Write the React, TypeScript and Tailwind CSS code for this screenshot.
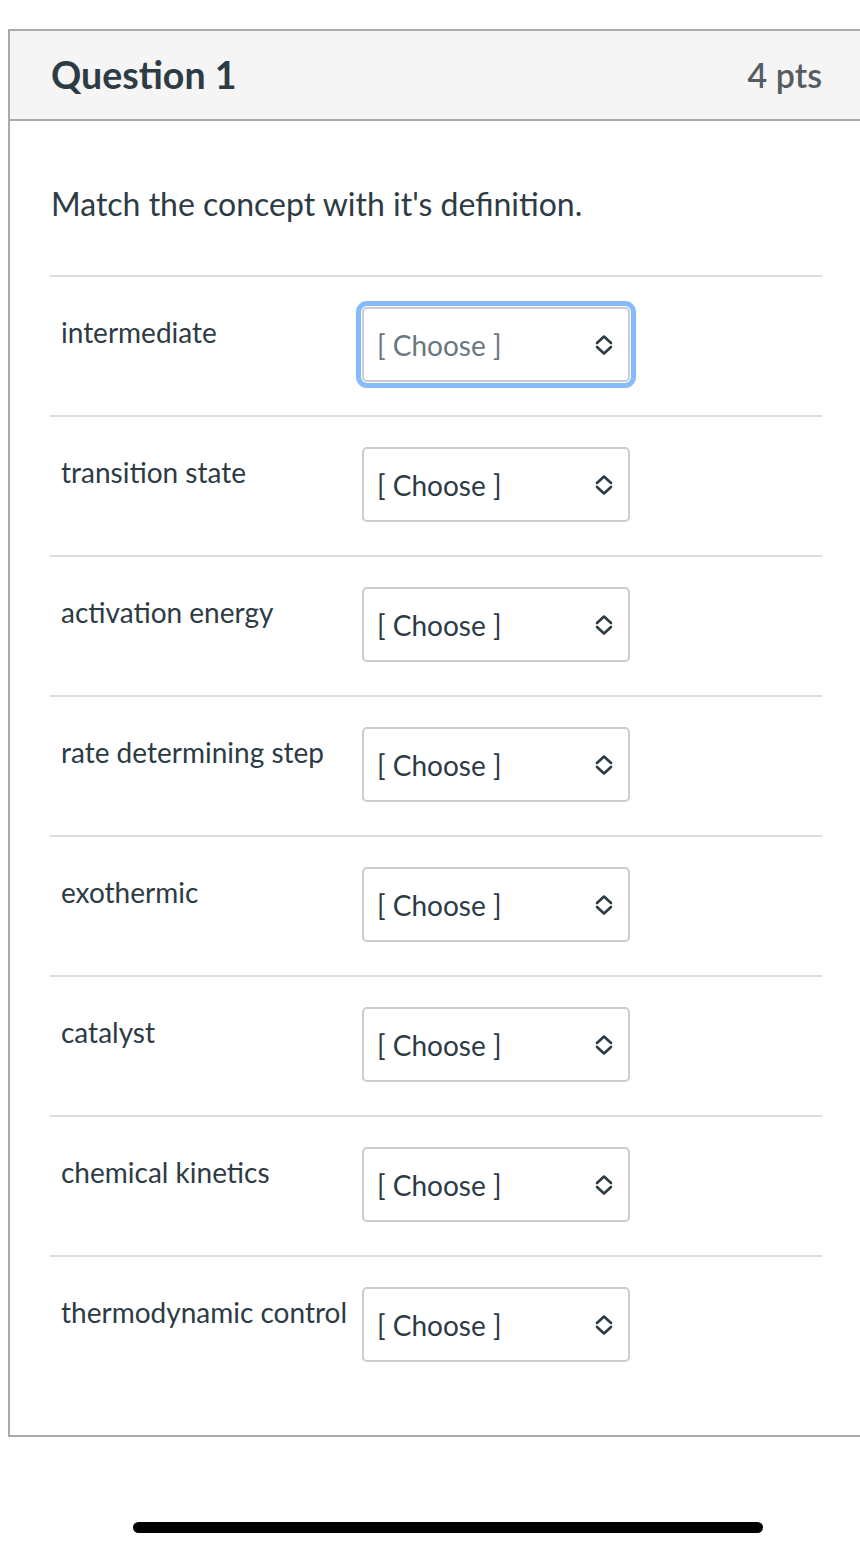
import React from 'react';

const rows = [
    'intermediate',
    'transition state',
    'activation energy',
    'rate determining step',
    'exothermic',
    'catalyst',
    'chemical kinetics',
    'thermodynamic control',
];

const Chevrons: React.FC = () => (
    <svg width="20" height="24" viewBox="0 0 20 24" fill="none" stroke="#2d3b45" strokeWidth="2.6" strokeLinecap="round" strokeLinejoin="round">
        <path d="M3 10 L10 3.5 L17 10" />
        <path d="M3 14 L10 20.5 L17 14" />
    </svg>
);

export default function App() {
    return (
        <div className="min-h-[1549px] bg-white font-['Lato','Noto_Sans',sans-serif] text-[#2d3b45] overflow-hidden">
            <div className="ml-[8px] mt-[29px] w-[852px] border-l-2 border-t-2 border-b-2 border-[#aaaaaa]">
                {/* Header */}
                <div className="h-[90px] bg-[#f5f5f5] border-b-2 border-[#aaaaaa] flex items-center justify-between pl-[41px] pr-[38px]">
                    <span className="text-[37.5px] font-bold leading-none">Question 1</span>
                    <span className="text-[34px] font-semibold text-[#565c61] leading-none">4 pts</span>
                </div>

                {/* Body */}
                <div className="pt-[62px] pb-[40px]">
                    <p className="pl-[41px] text-[32px] leading-[42px]">Match the concept with it's definition.</p>
                    <div className="mt-[50px] ml-[40px] w-[772px]">
                        {rows.map((label, i) => (
                            <div key={label} className="h-[140px] border-t-2 border-[#dddddd] flex">
                                <div className="w-[312px] pl-[11px] pt-[39px] text-[28px] leading-[32px] whitespace-nowrap">{label}</div>
                                <div className="pt-[30px]">
                                    <div
                                        className={
                                            i === 0
                                                ? 'w-[268px] h-[75px] border-2 border-[#c7cdd1] rounded-[5px] flex items-center justify-between pl-[13px] pr-[14px] ring-[5px] ring-[#85bbfa] ring-offset-1'
                                                : 'w-[268px] h-[75px] border-2 border-[#c7cdd1] rounded-[5px] flex items-center justify-between pl-[13px] pr-[14px]'
                                        }
                                    >
                                        <span className={i === 0 ? 'text-[28px] text-[#6b7780]' : 'text-[28px] text-[#2d3b45]'}>[ Choose ]</span>
                                        <Chevrons />
                                    </div>
                                </div>
                            </div>
                        ))}
                    </div>
                </div>
            </div>

            {/* Home indicator */}
            <div className="ml-[133px] mt-[85px] w-[630px] h-[11px] rounded-full bg-black" />
        </div>
    );
}
